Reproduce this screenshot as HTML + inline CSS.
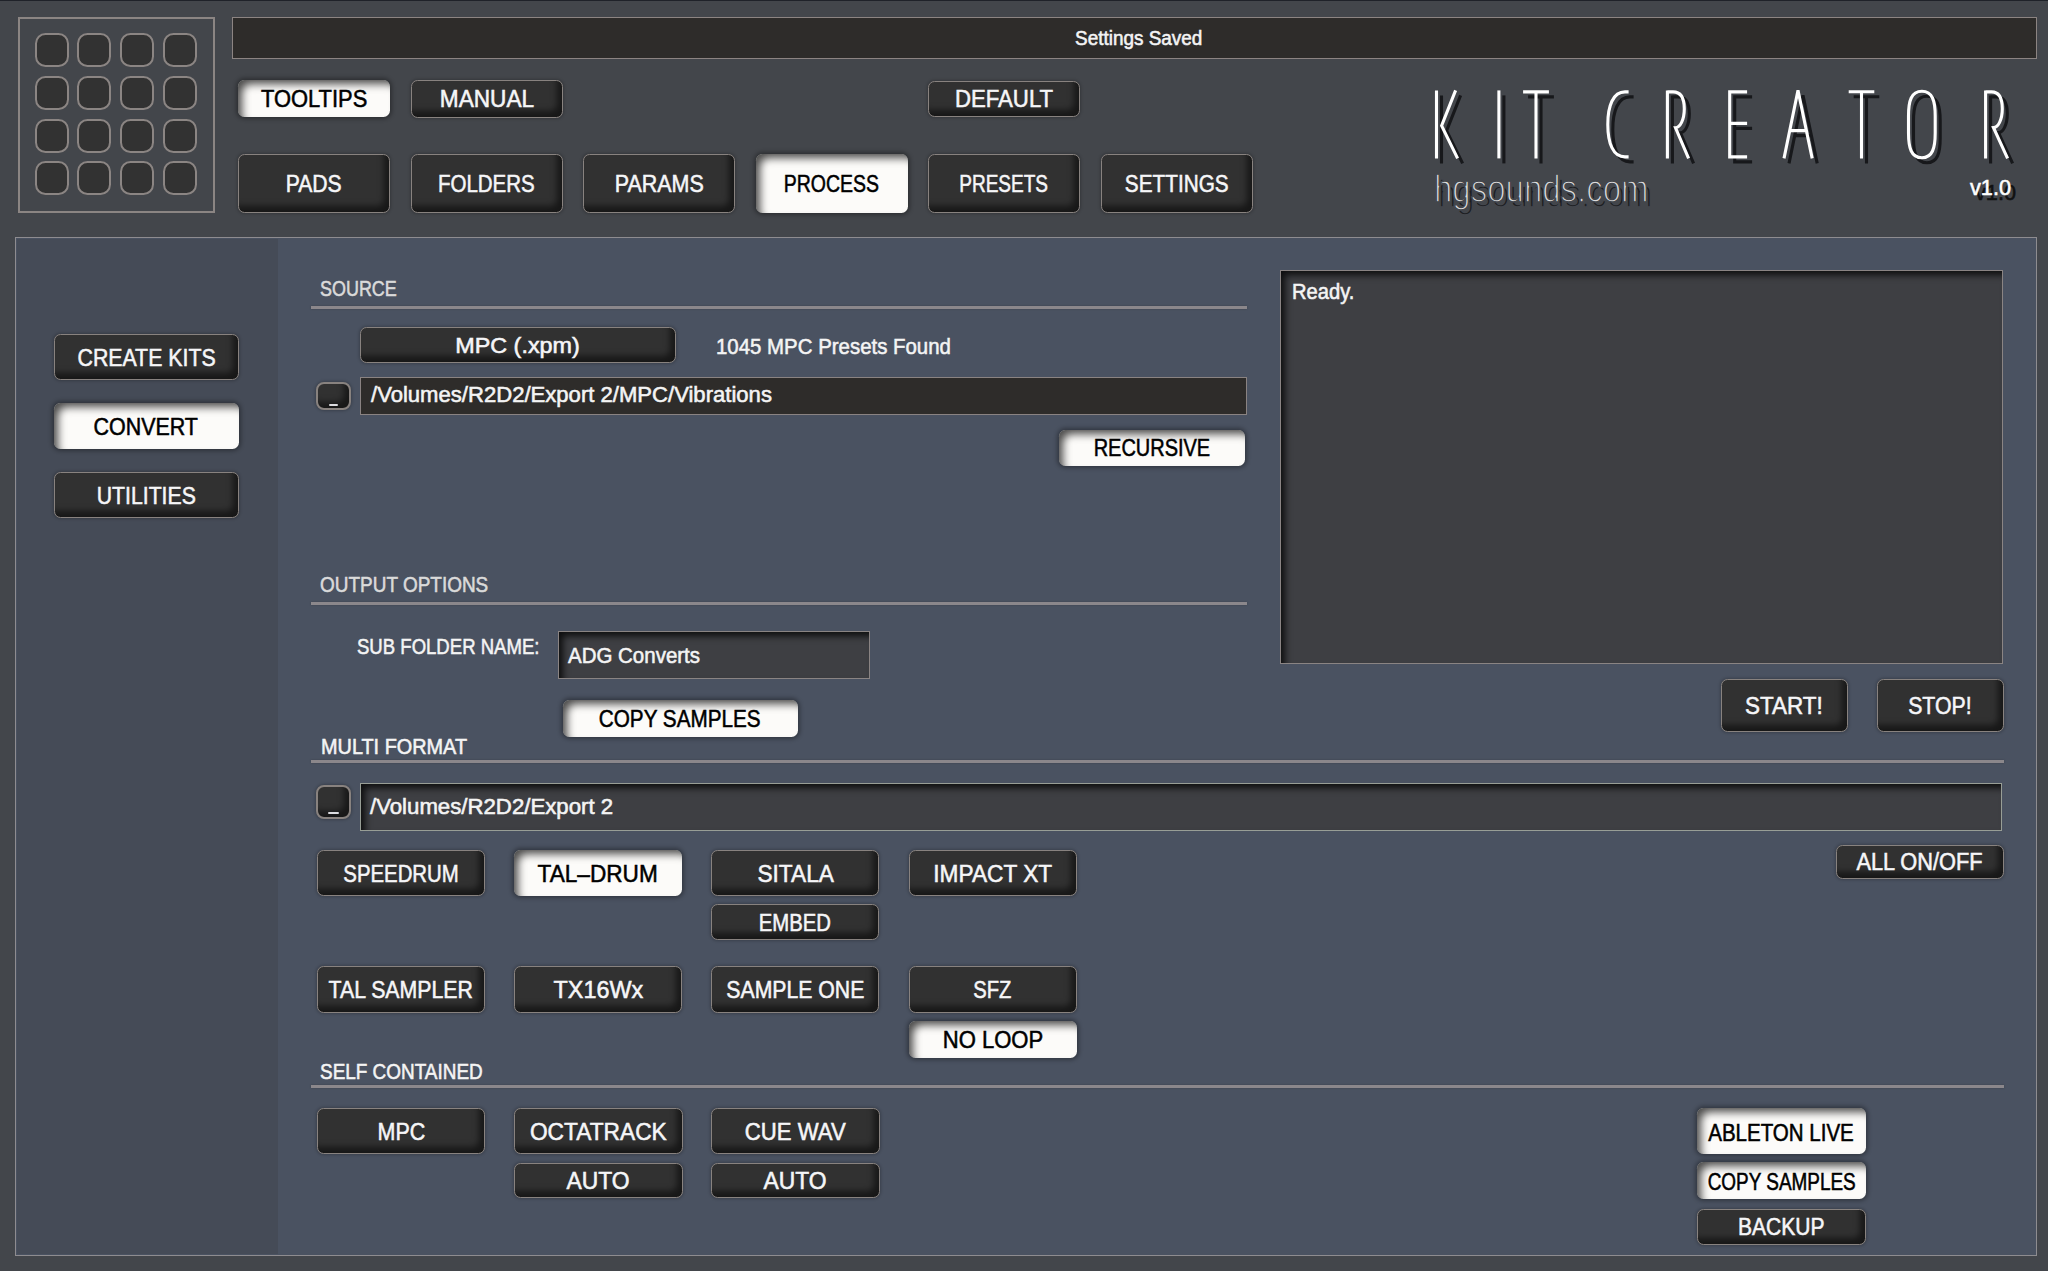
<!DOCTYPE html>
<html><head><meta charset="utf-8"><style>
html,body{margin:0;padding:0;width:2048px;height:1271px;overflow:hidden;background:#43464b;}
body{position:relative;font-family:"Liberation Sans",sans-serif;}
div{position:absolute;box-sizing:border-box;}
.abs{position:absolute;}
.pad{border:2px solid #8b8583;border-radius:10.5px;background:#323232;}
.bd{border:1.7px solid #88827f;border-radius:6.5px;background:#313131;box-shadow:inset -6px -7px 6px -1px rgba(0,0,0,.52),0 0 3px 1px rgba(0,0,0,.22);}
.bw{border-radius:6.5px;background:#fcfbf9;box-shadow:inset 6px 6px 8px -2px rgba(0,0,0,.7),0 0 4px 2px rgba(0,0,0,.33);}
.inbox{background:#3e3f43;border:1.6px solid #8a8483;box-shadow:inset 5px 5px 7px -1px rgba(0,0,0,.78);}
.dv{background:#8b878b;box-shadow:0 0 2px rgba(0,0,0,.25);}
.t{height:0;line-height:0;white-space:pre;-webkit-text-stroke:0.55px currentColor;}
svg{position:absolute;}
</style></head><body>
<div class="" style="left:0.00px;top:0.00px;width:2048.00px;height:1.00px;background:#1f2229"></div>
<div class="abs" style="left:17.80px;top:16.80px;width:197.40px;height:196.50px;border:2px solid #8b8583;box-sizing:border-box"></div>
<div class="pad" style="left:34.70px;top:33.10px;width:34.00px;height:34.00px;"></div>
<div class="pad" style="left:34.70px;top:75.90px;width:34.00px;height:34.00px;"></div>
<div class="pad" style="left:34.70px;top:118.60px;width:34.00px;height:34.00px;"></div>
<div class="pad" style="left:34.70px;top:161.30px;width:34.00px;height:34.00px;"></div>
<div class="pad" style="left:77.30px;top:33.10px;width:34.00px;height:34.00px;"></div>
<div class="pad" style="left:77.30px;top:75.90px;width:34.00px;height:34.00px;"></div>
<div class="pad" style="left:77.30px;top:118.60px;width:34.00px;height:34.00px;"></div>
<div class="pad" style="left:77.30px;top:161.30px;width:34.00px;height:34.00px;"></div>
<div class="pad" style="left:120.10px;top:33.10px;width:34.00px;height:34.00px;"></div>
<div class="pad" style="left:120.10px;top:75.90px;width:34.00px;height:34.00px;"></div>
<div class="pad" style="left:120.10px;top:118.60px;width:34.00px;height:34.00px;"></div>
<div class="pad" style="left:120.10px;top:161.30px;width:34.00px;height:34.00px;"></div>
<div class="pad" style="left:162.80px;top:33.10px;width:34.00px;height:34.00px;"></div>
<div class="pad" style="left:162.80px;top:75.90px;width:34.00px;height:34.00px;"></div>
<div class="pad" style="left:162.80px;top:118.60px;width:34.00px;height:34.00px;"></div>
<div class="pad" style="left:162.80px;top:161.30px;width:34.00px;height:34.00px;"></div>
<div class="" style="left:232.00px;top:16.50px;width:1804.50px;height:42.00px;background:#2e2c2a;border:1.9px solid #8c8482;box-sizing:border-box"></div>
<div class="bw" style="left:238.00px;top:80.00px;width:151.50px;height:37.00px;"></div>
<div class="bd" style="left:410.50px;top:80.00px;width:152.50px;height:37.50px;"></div>
<div class="bd" style="left:928.00px;top:80.50px;width:152.00px;height:36.50px;"></div>
<div class="bd" style="left:238.00px;top:154.00px;width:152.00px;height:58.50px;"></div>
<div class="bd" style="left:410.50px;top:154.00px;width:152.00px;height:58.50px;"></div>
<div class="bd" style="left:583.00px;top:154.00px;width:152.00px;height:58.50px;"></div>
<div class="bw" style="left:755.50px;top:154.00px;width:152.00px;height:58.50px;"></div>
<div class="bd" style="left:928.00px;top:154.00px;width:152.00px;height:58.50px;"></div>
<div class="bd" style="left:1100.50px;top:154.00px;width:152.00px;height:58.50px;"></div>
<svg class="abs" style="left:0;top:0" width="2048" height="240" viewBox="0 0 2048 240"><g id="kc" fill="none" stroke-width="3.1" stroke-linecap="butt"><path d="M1436.5 90.4V158.4M1455.6 90.4L1441.6 125.7L1457.6 158.4"/><path d="M1498.9 90.4V158.4"/><path d="M1523.1 91.9H1548.9M1536 90.4V158.4"/><path d="M1628.6 91.9H1625C1613 91.9 1607.8 106 1607.8 124.4C1607.8 143 1613 156.9 1625 156.9H1628.6"/><path d="M1667.4 90.4V158.4M1667.4 91.9H1673C1681 91.9 1684.3 99 1684.3 108.8C1684.3 120 1680 127.6 1675.5 127.8L1688.6 158.4"/><path d="M1729.7 90.4V158.4M1728.2 91.9H1747.1M1728.2 123.4H1747.1M1728.2 156.9H1747.1"/><path d="M1784 158.4L1798 90.4L1812.2 158.4M1790 130.6H1806.8"/><path d="M1848.7 91.7H1874.3M1861.5 90.4V158.4"/><path d="M1921.9 91.3C1932.5 91.3 1935.2 101 1935.2 116V133C1935.2 148 1932.5 157.7 1921.9 157.7C1911.2 157.7 1908.5 148 1908.5 133V116C1908.5 101 1911.2 91.3 1921.9 91.3Z"/><path d="M1985.6 90.4V158.4M1985.6 91.9H1991.5C1999.5 91.9 2002.3 99 2002.3 108.8C2002.3 120 1998 127.4 1993.5 127.6L2007.6 158.4"/></g><use href="#kc" x="5" y="5" stroke="#17181b"/><use href="#kc" stroke="#ffffff"/></svg>
<div class="" style="left:15.00px;top:237.00px;width:2021.60px;height:1019.00px;background:#4a5261;border:1.8px solid #8e8c90;box-sizing:border-box"></div>
<div class="" style="left:16.50px;top:238.50px;width:261.10px;height:1015.50px;background:#454b57"></div>
<div class="bd" style="left:54.00px;top:334.00px;width:184.50px;height:46.00px;"></div>
<div class="bw" style="left:54.00px;top:403.00px;width:184.50px;height:46.00px;"></div>
<div class="bd" style="left:54.00px;top:472.00px;width:184.50px;height:46.00px;"></div>
<div class="dv" style="left:310.60px;top:305.90px;width:936.90px;height:3.00px;"></div>
<div class="bd" style="left:359.50px;top:327.00px;width:316.00px;height:36.00px;"></div>
<div class="bd" style="left:316.30px;top:382.00px;width:34.50px;height:28.00px;border-radius:8px;border-width:2px"></div>
<div class="" style="left:328.90px;top:403.90px;width:9.60px;height:2.30px;background:#dcdce0;border-radius:1px"></div>
<div class="" style="left:360.00px;top:377.00px;width:887.00px;height:38.00px;background:#2e2c2a;border:1.5px solid #8a8382;box-sizing:border-box"></div>
<div class="bw" style="left:1059.00px;top:429.50px;width:185.50px;height:36.00px;"></div>
<div class="inbox" style="left:1280.30px;top:269.50px;width:722.70px;height:394.30px;"></div>
<div class="bd" style="left:1720.50px;top:679.00px;width:127.00px;height:52.50px;"></div>
<div class="bd" style="left:1877.00px;top:679.00px;width:126.50px;height:52.50px;"></div>
<div class="dv" style="left:310.60px;top:601.90px;width:936.90px;height:3.00px;"></div>
<div class="inbox" style="left:557.50px;top:630.50px;width:312.00px;height:48.00px;"></div>
<div class="bw" style="left:562.50px;top:700.00px;width:235.00px;height:37.00px;"></div>
<div class="dv" style="left:310.60px;top:759.70px;width:1693.10px;height:3.00px;"></div>
<div class="bd" style="left:316.30px;top:785.30px;width:34.50px;height:34.20px;border-radius:8px;border-width:2px"></div>
<div class="" style="left:327.90px;top:812.00px;width:11.30px;height:2.10px;background:#dcdce0;border-radius:1px"></div>
<div class="inbox" style="left:360.00px;top:782.80px;width:1642.00px;height:48.70px;border-color:#989e96"></div>
<div class="bd" style="left:1835.50px;top:845.00px;width:168.00px;height:33.50px;"></div>
<div class="bd" style="left:316.80px;top:849.80px;width:168.00px;height:46.50px;"></div>
<div class="bw" style="left:514.00px;top:849.80px;width:168.00px;height:46.50px;"></div>
<div class="bd" style="left:711.30px;top:849.80px;width:168.00px;height:46.50px;"></div>
<div class="bd" style="left:908.60px;top:849.80px;width:168.00px;height:46.50px;"></div>
<div class="bd" style="left:316.80px;top:966.30px;width:168.00px;height:46.90px;"></div>
<div class="bd" style="left:514.00px;top:966.30px;width:168.00px;height:46.90px;"></div>
<div class="bd" style="left:711.30px;top:966.30px;width:168.00px;height:46.90px;"></div>
<div class="bd" style="left:908.60px;top:966.30px;width:168.00px;height:46.90px;"></div>
<div class="bd" style="left:711.30px;top:904.30px;width:168.00px;height:36.00px;"></div>
<div class="bw" style="left:908.60px;top:1020.50px;width:168.00px;height:37.00px;"></div>
<div class="dv" style="left:310.60px;top:1085.20px;width:1693.40px;height:3.00px;"></div>
<div class="bd" style="left:316.80px;top:1108.00px;width:168.50px;height:46.00px;"></div>
<div class="bd" style="left:514.00px;top:1108.00px;width:168.50px;height:46.00px;"></div>
<div class="bd" style="left:711.30px;top:1108.00px;width:168.50px;height:46.00px;"></div>
<div class="bd" style="left:514.00px;top:1162.80px;width:168.50px;height:35.70px;"></div>
<div class="bd" style="left:711.30px;top:1162.80px;width:168.50px;height:35.70px;"></div>
<div class="bw" style="left:1697.30px;top:1108.00px;width:168.30px;height:46.20px;"></div>
<div class="bw" style="left:1697.30px;top:1162.30px;width:168.30px;height:36.60px;"></div>
<div class="bd" style="left:1697.30px;top:1208.70px;width:168.30px;height:36.00px;"></div>
<div class="t" style="left:1074.70px;top:38.33px;font-size:19.91px;color:#f4f4f4;transform:scaleX(0.9511);transform-origin:left 0;">Settings Saved</div>
<div class="t" style="left:255.55px;top:99.08px;font-size:23.98px;color:#000;transform:scaleX(0.9131);transform-origin:center 0;">TOOLTIPS</div>
<div class="t" style="left:436.78px;top:99.33px;font-size:23.98px;color:#f6f6f8;transform:scaleX(0.9443);transform-origin:center 0;">MANUAL</div>
<div class="t" style="left:949.95px;top:99.33px;font-size:24.42px;color:#f6f6f8;transform:scaleX(0.9094);transform-origin:center 0;">DEFAULT</div>
<div class="t" style="left:281.27px;top:183.83px;font-size:24.71px;color:#f6f6f8;transform:scaleX(0.8560);transform-origin:center 0;">PADS</div>
<div class="t" style="left:428.15px;top:183.83px;font-size:24.71px;color:#f6f6f8;transform:scaleX(0.8305);transform-origin:center 0;">FOLDERS</div>
<div class="t" style="left:607.74px;top:183.83px;font-size:24.71px;color:#f6f6f8;transform:scaleX(0.8694);transform-origin:center 0;">PARAMS</div>
<div class="t" style="left:771.08px;top:183.83px;font-size:24.71px;color:#000;transform:scaleX(0.7881);transform-origin:center 0;">PROCESS</div>
<div class="t" style="left:946.33px;top:183.83px;font-size:24.71px;color:#f6f6f8;transform:scaleX(0.7701);transform-origin:center 0;">PRESETS</div>
<div class="t" style="left:1114.72px;top:183.83px;font-size:24.71px;color:#f6f6f8;transform:scaleX(0.8403);transform-origin:center 0;">SETTINGS</div>
<div class="t" style="left:1438.37px;top:193.51px;font-size:37.93px;color:#1d1e21;transform:scaleX(0.8701);transform-origin:left 0;-webkit-text-stroke:1.6px #43464c;">hgsounds.com</div>
<div class="t" style="left:1433.67px;top:189.41px;font-size:37.93px;color:#dcdcdc;transform:scaleX(0.8701);transform-origin:left 0;-webkit-text-stroke:1.6px #43464c;paint-order:normal;">hgsounds.com</div>
<div class="t" style="left:1974.74px;top:192.68px;font-size:21.80px;color:#111;transform:scaleX(0.9955);transform-origin:left 0;">v1.0</div>
<div class="t" style="left:1970.24px;top:188.08px;font-size:21.80px;color:#fff;transform:scaleX(0.9955);transform-origin:left 0;">v1.0</div>
<div class="t" style="left:66.63px;top:357.58px;font-size:24.56px;color:#f6f6f8;transform:scaleX(0.8680);transform-origin:center 0;">CREATE KITS</div>
<div class="t" style="left:86.42px;top:426.58px;font-size:24.56px;color:#000;transform:scaleX(0.8727);transform-origin:center 0;">CONVERT</div>
<div class="t" style="left:88.92px;top:495.58px;font-size:24.56px;color:#f6f6f8;transform:scaleX(0.8645);transform-origin:center 0;">UTILITIES</div>
<div class="t" style="left:319.64px;top:289.48px;font-size:21.80px;color:#dadada;transform:scaleX(0.8236);transform-origin:left 0;">SOURCE</div>
<div class="t" style="left:458.98px;top:345.58px;font-size:21.95px;color:#f6f6f8;transform:scaleX(1.0648);transform-origin:center 0;">MPC (.xpm)</div>
<div class="t" style="left:715.50px;top:346.38px;font-size:22.97px;color:#f4f4f4;transform:scaleX(0.8890);transform-origin:left 0;">1045 MPC Presets Found</div>
<div class="t" style="left:371.24px;top:395.48px;font-size:21.80px;color:#f4f4f4;transform:scaleX(1.0131);transform-origin:left 0;">/Volumes/R2D2/Export 2/MPC/Vibrations</div>
<div class="t" style="left:1081.79px;top:448.08px;font-size:23.98px;color:#000;transform:scaleX(0.8331);transform-origin:center 0;">RECURSIVE</div>
<div class="t" style="left:1291.94px;top:292.48px;font-size:21.80px;color:#f4f4f4;transform:scaleX(0.9238);transform-origin:left 0;">Ready.</div>
<div class="t" style="left:1741.21px;top:705.83px;font-size:24.71px;color:#f6f6f8;transform:scaleX(0.9083);transform-origin:center 0;">START!</div>
<div class="t" style="left:1903.40px;top:705.83px;font-size:24.71px;color:#f6f6f8;transform:scaleX(0.8607);transform-origin:center 0;">STOP!</div>
<div class="t" style="left:319.96px;top:584.58px;font-size:21.22px;color:#dadada;transform:scaleX(0.8939);transform-origin:left 0;">OUTPUT OPTIONS</div>
<div class="t" style="left:357.10px;top:645.88px;font-size:22.97px;color:#f4f4f4;transform:scaleX(0.8076);transform-origin:left 0;">SUB FOLDER NAME:</div>
<div class="t" style="left:568.25px;top:655.58px;font-size:21.51px;color:#f4f4f4;transform:scaleX(0.9526);transform-origin:left 0;">ADG Converts</div>
<div class="t" style="left:586.25px;top:719.08px;font-size:23.98px;color:#000;transform:scaleX(0.8634);transform-origin:center 0;">COPY SAMPLES</div>
<div class="t" style="left:320.54px;top:746.73px;font-size:21.66px;color:#f4f4f4;transform:scaleX(0.9172);transform-origin:left 0;">MULTI FORMAT</div>
<div class="t" style="left:370.24px;top:807.23px;font-size:21.66px;color:#f4f4f4;transform:scaleX(1.0252);transform-origin:left 0;">/Volumes/R2D2/Export 2</div>
<div class="t" style="left:1849.98px;top:862.33px;font-size:23.98px;color:#f6f6f8;transform:scaleX(0.9075);transform-origin:center 0;">ALL ON/OFF</div>
<div class="t" style="left:330.78px;top:873.63px;font-size:24.71px;color:#f6f6f8;transform:scaleX(0.8243);transform-origin:center 0;">SPEEDRUM</div>
<div class="t" style="left:532.33px;top:873.63px;font-size:24.71px;color:#000;transform:scaleX(0.9146);transform-origin:center 0;">TAL–DRUM</div>
<div class="t" style="left:753.64px;top:873.63px;font-size:24.71px;color:#f6f6f8;transform:scaleX(0.9174);transform-origin:center 0;">SITALA</div>
<div class="t" style="left:927.85px;top:873.63px;font-size:24.71px;color:#f6f6f8;transform:scaleX(0.9183);transform-origin:center 0;">IMPACT XT</div>
<div class="t" style="left:317.04px;top:990.33px;font-size:24.71px;color:#f6f6f8;transform:scaleX(0.8615);transform-origin:center 0;">TAL SAMPLER</div>
<div class="t" style="left:550.63px;top:990.33px;font-size:24.71px;color:#f6f6f8;transform:scaleX(0.9461);transform-origin:center 0;">TX16Wx</div>
<div class="t" style="left:714.97px;top:990.33px;font-size:24.71px;color:#f6f6f8;transform:scaleX(0.8591);transform-origin:center 0;">SAMPLE ONE</div>
<div class="t" style="left:969.27px;top:990.33px;font-size:24.71px;color:#f6f6f8;transform:scaleX(0.8170);transform-origin:center 0;">SFZ</div>
<div class="t" style="left:752.40px;top:922.88px;font-size:24.13px;color:#f6f6f8;transform:scaleX(0.8413);transform-origin:center 0;">EMBED</div>
<div class="t" style="left:937.63px;top:1039.58px;font-size:24.13px;color:#000;transform:scaleX(0.9140);transform-origin:center 0;">NO LOOP</div>
<div class="t" style="left:319.72px;top:1071.63px;font-size:22.24px;color:#f4f4f4;transform:scaleX(0.8516);transform-origin:left 0;">SELF CONTAINED</div>
<div class="t" style="left:373.60px;top:1131.58px;font-size:24.71px;color:#f6f6f8;transform:scaleX(0.8693);transform-origin:center 0;">MPC</div>
<div class="t" style="left:523.89px;top:1131.58px;font-size:24.71px;color:#f6f6f8;transform:scaleX(0.9201);transform-origin:center 0;">OCTATRACK</div>
<div class="t" style="left:739.26px;top:1131.58px;font-size:24.71px;color:#f6f6f8;transform:scaleX(0.8957);transform-origin:center 0;">CUE WAV</div>
<div class="t" style="left:565.16px;top:1181.23px;font-size:23.98px;color:#f6f6f8;transform:scaleX(0.9545);transform-origin:center 0;">AUTO</div>
<div class="t" style="left:762.46px;top:1181.23px;font-size:23.98px;color:#f6f6f8;transform:scaleX(0.9545);transform-origin:center 0;">AUTO</div>
<div class="t" style="left:1698.43px;top:1133.08px;font-size:23.40px;color:#000;transform:scaleX(0.8771);transform-origin:center 0;">ABLETON LIVE</div>
<div class="t" style="left:1687.70px;top:1181.88px;font-size:23.98px;color:#000;transform:scaleX(0.7903);transform-origin:center 0;">COPY SAMPLES</div>
<div class="t" style="left:1732.14px;top:1227.28px;font-size:23.98px;color:#f6f6f8;transform:scaleX(0.8779);transform-origin:center 0;">BACKUP</div>
</body></html>
